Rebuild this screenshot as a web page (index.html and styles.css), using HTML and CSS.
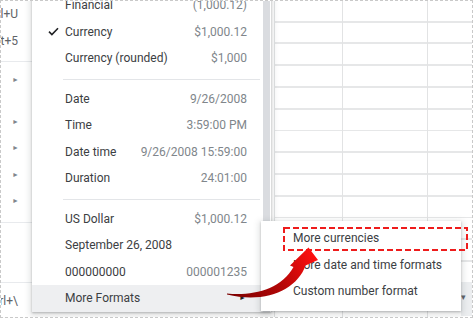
FILE: index.html
```html
<!DOCTYPE html>
<html lang="en">
<head>
    <meta charset="UTF-8">
    <title>Number formats menu</title>
    <link rel="stylesheet" href="styles.css">
</head>
<body>
    <div class="frame">
        <!-- parent Format menu, mostly hidden behind the number menu -->
        <div class="parent-menu">
            <div class="key-row"><span>Ctrl+U</span></div>
            <div class="key-row"><span>Alt+Shift+5</span></div>
            <div class="rule"></div>
            <div class="key-row arrow-row gap-after"><span>►</span></div>
            <div class="key-row arrow-row"><span>►</span></div>
            <div class="key-row arrow-row"><span>►</span></div>
            <div class="key-row arrow-row"><span>►</span></div>
            <div class="key-row arrow-row"><span>►</span></div>
            <div class="rule"></div>
            <div class="spacer"></div>
            <div class="rule"></div>
            <div class="key-row"><span>Ctrl+\</span></div>
        </div>

        <!-- number format menu -->
        <div class="format-menu">
            <div class="menu-list">
                <div class="item"><span class="mark"></span><span class="label">Financial</span><span class="value">(1,000.12)</span></div>
                <div class="item">
                    <span class="mark">
                        <svg width="11" height="9" viewBox="0 0 11 9"><path d="M1 4.6 L3.9 7.5 L10 1.2" fill="none" stroke="#202124" stroke-width="1.6"/></svg>
                    </span>
                    <span class="label">Currency</span><span class="value">$1,000.12</span>
                </div>
                <div class="item"><span class="mark"></span><span class="label">Currency (rounded)</span><span class="value">$1,000</span></div>
                <div class="separator"></div>
                <div class="item"><span class="mark"></span><span class="label">Date</span><span class="value">9/26/2008</span></div>
                <div class="item"><span class="mark"></span><span class="label">Time</span><span class="value">3:59:00 PM</span></div>
                <div class="item"><span class="mark"></span><span class="label">Date time</span><span class="value">9/26/2008 15:59:00</span></div>
                <div class="item"><span class="mark"></span><span class="label">Duration</span><span class="value">24:01:00</span></div>
                <div class="separator"></div>
                <div class="item"><span class="mark"></span><span class="label">US Dollar</span><span class="value">$1,000.12</span></div>
                <div class="item"><span class="mark"></span><span class="label">September 26, 2008</span></div>
                <div class="item"><span class="mark"></span><span class="label">000000000</span><span class="value">000001235</span></div>
                <div class="item active"><span class="mark"></span><span class="label">More Formats</span><span class="sub-arrow">►</span></div>
            </div>
            <div class="scrollbar"></div>
        </div>

        <!-- spreadsheet cells behind the menus -->
        <div class="sheet">
            <div class="col col-a"></div>
            <div class="col col-b"></div>
            <div class="col col-c"></div>
            <div class="col col-d">
                <div class="chip">▾</div>
            </div>
        </div>

        <!-- More Formats submenu -->
        <div class="submenu">
            <div class="sub-item">More currencies</div>
            <div class="sub-item">More date and time formats</div>
            <div class="sub-item">Custom number format</div>
        </div>

        <!-- annotation: dashed box and red arrow -->
        <svg class="annotation" width="474" height="320" viewBox="0 0 474 320">
            <defs>
                <linearGradient id="arrowFill" x1="228" y1="296" x2="312" y2="250" gradientUnits="userSpaceOnUse">
                    <stop offset="0" stop-color="#7a0000"/>
                    <stop offset="0.55" stop-color="#b50707"/>
                    <stop offset="1" stop-color="#ff1010"/>
                </linearGradient>
            </defs>
            <rect x="284" y="228" width="183" height="22" fill="none" stroke="#ee1c1c" stroke-width="2" stroke-dasharray="6 3"/>
            <path d="M227 293.5 C252 296 281 290 293.5 267 L290 265.5 L308.5 247.5 L318 260 L305.5 265.5 C297 290 265 304 227 294.5 Z" fill="url(#arrowFill)"/>
        </svg>
    </div>
</body>
</html>
```

FILE: styles.css
```css
/* Base */
* {
    margin: 0;
    padding: 0;
    box-sizing: border-box;
}

body {
    width: 474px;
    height: 320px;
    overflow: hidden;
    background-color: #fff;
    font-family: Roboto, 'Liberation Sans', sans-serif;
    font-size: 12px;
    color: #3c4043;
}

.frame {
    position: relative;
    display: flex;
    align-items: flex-start;
    width: 473px;
    height: 318px;
    border: 1px dashed #c9c9c9;
    overflow: hidden;
}

/* Parent menu (left strip) */
.parent-menu {
    width: 31px;
    height: 100%;
    flex-shrink: 0;
    background-color: #fff;
    overflow: hidden;
}

.key-row {
    display: flex;
    justify-content: flex-end;
    align-items: center;
    height: 26.5px;
    padding-right: 14px;
    white-space: nowrap;
    color: #5f6368;
}

.arrow-row {
    padding-right: 13px;
    font-size: 7px;
    color: #80868b;
}

.gap-after {
    margin-bottom: 15px;
}

.parent-menu .rule {
    height: 1px;
    margin: 7px 0 5px;
    background-color: #e8eaed;
}

.parent-menu .spacer {
    height: 47px;
}

/* Number format menu */
.format-menu {
    display: flex;
    width: 239px;
    flex-shrink: 0;
    margin-top: -9px;
    background-color: #fff;
    box-shadow: 0 1px 2px rgba(60, 64, 67, 0.3), 0 2px 6px 2px rgba(60, 64, 67, 0.15);
    z-index: 2;
}

.menu-list {
    flex: 1;
}

.item {
    display: flex;
    align-items: center;
    height: 26.5px;
    padding: 0 16px;
    white-space: nowrap;
}

.item.active {
    background-color: #eeeff1;
}

.mark {
    display: flex;
    align-items: center;
    width: 17px;
    flex-shrink: 0;
}

.label {
    flex: 1;
    color: #3c4043;
}

.value {
    color: #80868b;
}

.sub-arrow {
    margin-right: 1px;
    font-size: 7px;
    color: #202124;
}

.separator {
    height: 1px;
    margin: 7px 3px 6px 31px;
    background-color: #e3e5e8;
}

.scrollbar {
    align-self: stretch;
    width: 7px;
    margin-right: 1px;
    background-color: #dadce0;
}

/* Sheet grid */
.sheet {
    display: flex;
    flex: 1;
    height: 100%;
}

.col {
    height: 100%;
    border-right: 1px solid #e2e3e4;
    background-image: repeating-linear-gradient(to bottom, transparent 0, transparent 19.75px, #e6e7e8 19.75px, #e6e7e8 21.75px);
}

.col-a {
    width: 4px;
    background-image: none;
}

.col-b {
    width: 68px;
}

.col-c {
    width: 85px;
}

.col-d {
    flex: 1;
    border-right: none;
    display: flex;
    flex-direction: column;
    align-items: flex-end;
}

.chip {
    width: 11px;
    height: 34px;
    margin-top: 281px;
    padding-top: 10px;
    background-color: #eceef0;
    font-size: 9px;
    color: #5f6368;
}

/* Submenu */
.submenu {
    position: absolute;
    left: 260px;
    top: 220px;
    width: 200px;
    padding: 4px 0 6px;
    background-color: #fff;
    box-shadow: 0 1px 2px rgba(60, 64, 67, 0.3), 0 2px 6px 2px rgba(60, 64, 67, 0.15);
    z-index: 3;
}

.sub-item {
    display: flex;
    align-items: center;
    height: 26.5px;
    padding-left: 32px;
    white-space: nowrap;
    color: #3c4043;
}

/* Annotation overlay */
.annotation {
    position: absolute;
    left: -1px;
    top: -1px;
    z-index: 4;
    pointer-events: none;
}
```
